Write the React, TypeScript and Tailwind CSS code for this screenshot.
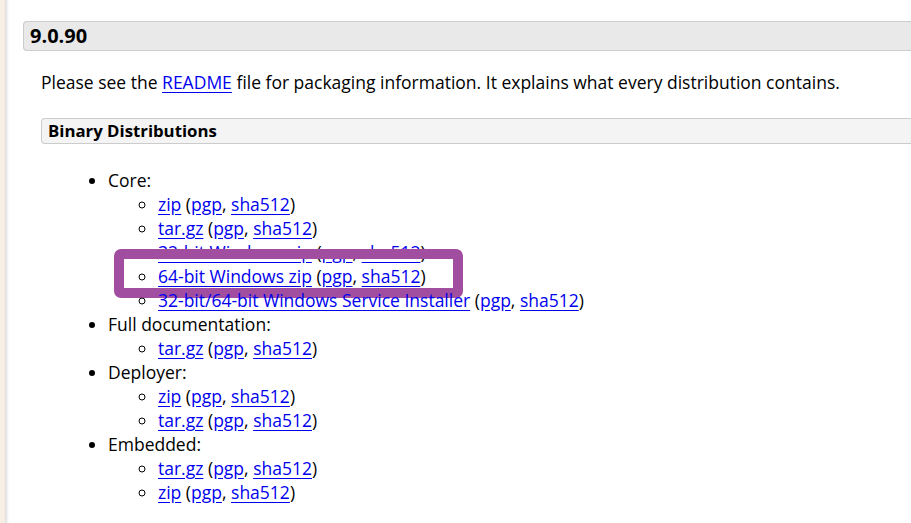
import React from "react";

type Item = { label: string; highlight?: boolean };
type Group = { title: string; items: Item[] };

const groups: Group[] = [
  {
    title: "Core:",
    items: [
      { label: "zip" },
      { label: "tar.gz" },
      { label: "32-bit Windows zip" },
      { label: "64-bit Windows zip", highlight: true },
      { label: "32-bit/64-bit Windows Service Installer" },
    ],
  },
  { title: "Full documentation:", items: [{ label: "tar.gz" }] },
  { title: "Deployer:", items: [{ label: "zip" }, { label: "tar.gz" }] },
  { title: "Embedded:", items: [{ label: "tar.gz" }, { label: "zip" }] },
];

function A({ children }: { children: React.ReactNode }) {
  return <a href="#" className="text-[#0000ee] underline underline-offset-[3px]">{children}</a>;
}

export default function App() {
  return (
    <div
      className="flex min-h-[523px] w-[911px] overflow-hidden bg-white text-black"
      style={{ fontFamily: '"Open Sans", "Noto Sans", sans-serif' }}
    >
      <div className="w-[5px] shrink-0 bg-[#f7efe3]" />
      <div className="w-[4px] shrink-0 bg-gradient-to-r from-[#dcdcdc] to-white" />
      <main className="min-w-0 flex-1 pl-[14px] pt-[21px]">
        <div className="-mr-[20px] h-[30px] rounded-l-[4px] border border-r-0 border-[#cccccc] bg-[#e9e9e9] pl-[6px] text-[20px] font-bold leading-[28px]">
          9.0.90
        </div>
        <div className="pl-[18px]">
          <p className="mt-[19px] whitespace-nowrap text-[17.5px] leading-[24px]">
            Please see the <A>README</A> file for packaging information. It explains what every distribution contains.
          </p>
          <div className="-mr-[20px] mt-[24px] h-[26px] rounded-l-[4px] border border-r-0 border-[#cccccc] bg-[#f4f4f4] pl-[6px] text-[16.8px] font-bold leading-[24px]">
            Binary Distributions
          </div>
          <ul className="mt-[24px] list-disc pl-[67px] text-[17.5px] leading-[24px]">
            {groups.map((g) => (
              <li key={g.title}>
                {g.title}
                <ul className="list-[circle] pl-[50px]">
                  {g.items.map((it, i) => (
                    <li key={i} className="relative whitespace-nowrap">
                      <A>{it.label}</A> (<A>pgp</A>, <A>sha512</A>)
                      {it.highlight && (
                        <span className="pointer-events-none absolute left-[-44px] top-[-15px] h-[49px] w-[349px] rounded-[7px] border-[10px] border-[#a24ea0]" />
                      )}
                    </li>
                  ))}
                </ul>
              </li>
            ))}
          </ul>
        </div>
      </main>
    </div>
  );
}
